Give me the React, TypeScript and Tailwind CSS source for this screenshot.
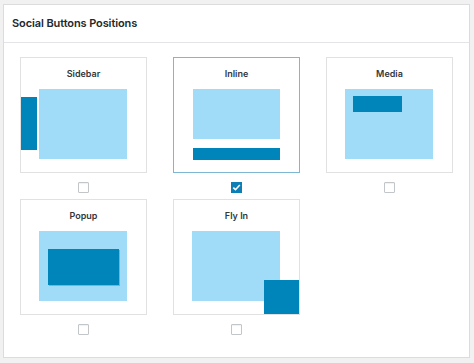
import { useState } from "react";

type Position = {
  id: string;
  label: string;
};

const positions: Position[] = [
  { id: "sidebar", label: "Sidebar" },
  { id: "inline", label: "Inline" },
  { id: "media", label: "Media" },
  { id: "popup", label: "Popup" },
  { id: "flyin", label: "Fly In" },
];

const LIGHT = "#a0dcf8";
const DARK = "#0085ba";

function Preview({ id }: { id: string }) {
  return (
    <svg width="125" height="83" viewBox="0 0 125 83" className="block">
      {id === "inline" ? (
        <>
          <rect x="19" y="0" width="87" height="50" fill={LIGHT} />
          <rect x="19" y="59" width="87" height="12" fill={DARK} />
        </>
      ) : (
        <rect x="18" y="0" width="88" height="70" fill={LIGHT} />
      )}
      {id === "sidebar" && <rect x="0" y="8" width="16" height="53" fill={DARK} />}
      {id === "media" && <rect x="26" y="7" width="49" height="16" fill={DARK} />}
      {id === "popup" && (
        <>
          <rect x="28" y="19" width="71" height="36" fill="#1a6f94" opacity="0.35" />
          <rect x="27" y="18" width="71" height="36" fill={DARK} />
        </>
      )}
      {id === "flyin" && <rect x="90" y="49" width="35" height="34" fill={DARK} />}
    </svg>
  );
}

function Checkbox({ checked }: { checked: boolean }) {
  if (checked) {
    return (
      <span className="flex h-[11px] w-[11px] items-center justify-center bg-[#0e7fb5]">
        <svg width="9" height="9" viewBox="0 0 9 9">
          <path d="M1.3 4.6 L3.5 6.7 L7.8 2" fill="none" stroke="white" strokeWidth="1.6" />
        </svg>
      </span>
    );
  }
  return (
    <span className="block h-[11px] w-[11px] rounded-[1px] border border-[#c3c6c9] bg-white shadow-[inset_0_1px_1px_rgba(0,0,0,0.06)]" />
  );
}

export default function App() {
  const [selected, setSelected] = useState<string>("inline");

  return (
    <div className="h-[363px] w-[474px] bg-[#f1f1f1] pl-[3px] pt-[4px] font-['Inter',sans-serif]">
      <div className="h-[354px] w-[467px] border border-[#dcdcde] bg-white">
        <div className="flex h-[38px] items-center border-b border-[#e2e4e7] pl-[8px]">
          <h2 className="text-[11px] font-semibold tracking-[-0.1px] text-[#23282d]">Social Buttons Positions</h2>
        </div>
        <div className="grid grid-cols-[127px_127px_127px] gap-x-[26px] pl-[16px] pt-[14px]">
          {positions.map((p) => {
            const active = selected === p.id;
            return (
              <div key={p.id} className="flex flex-col items-center">
                <button
                  onClick={() => setSelected(p.id)}
                  className={`h-[116px] w-[127px] border ${active ? "border-[#7cb8d6]" : "border-[#e1e1e1]"} bg-white`}
                >
                  <div className="flex h-[31px] items-center justify-center pt-[1px] text-[9px] font-semibold text-[#32373c]">
                    {p.label}
                  </div>
                  <Preview id={p.id} />
                </button>
                <div className="flex h-[26px] items-start justify-center pt-[9px]">
                  <Checkbox checked={active} />
                </div>
              </div>
            );
          })}
        </div>
      </div>
    </div>
  );
}
